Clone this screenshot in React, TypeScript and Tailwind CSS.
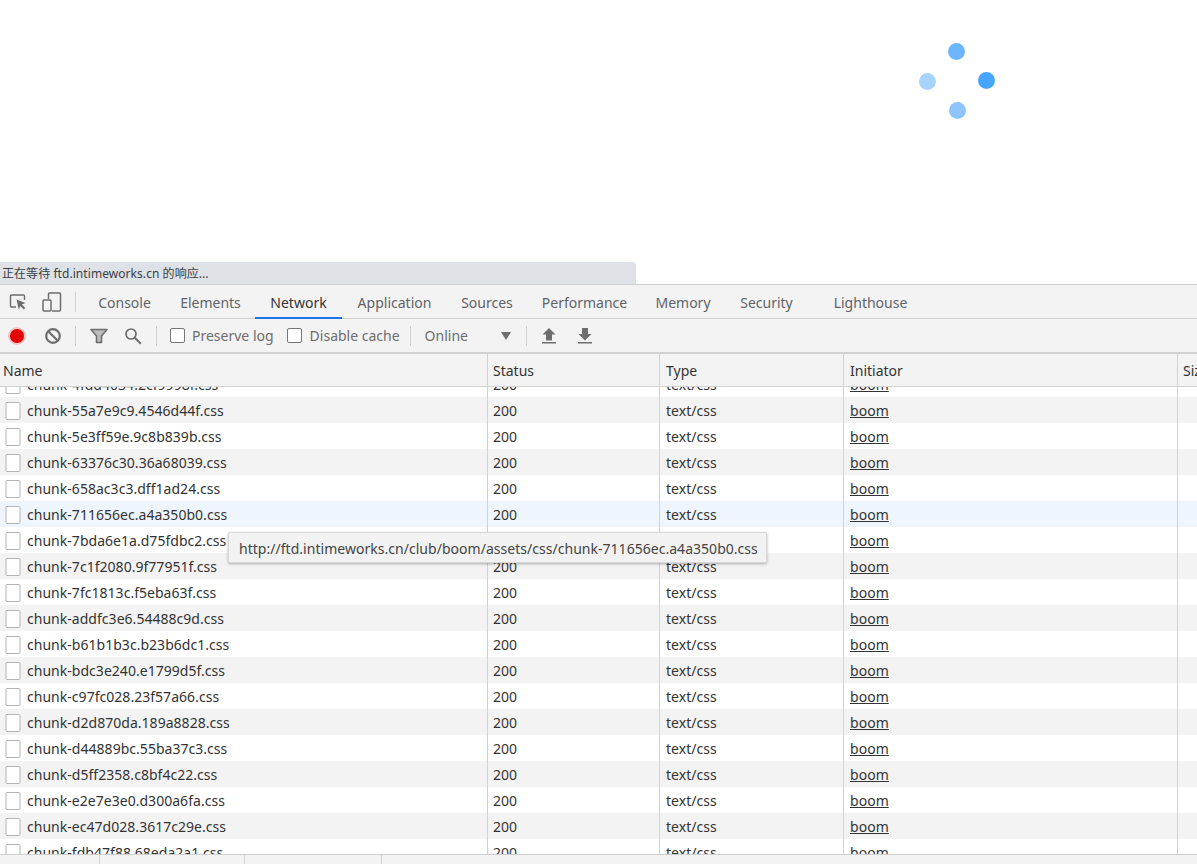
import React from "react";

const names = [
  "chunk-4fdd4034.2cf9998f.css",
  "chunk-55a7e9c9.4546d44f.css",
  "chunk-5e3ff59e.9c8b839b.css",
  "chunk-63376c30.36a68039.css",
  "chunk-658ac3c3.dff1ad24.css",
  "chunk-711656ec.a4a350b0.css",
  "chunk-7bda6e1a.d75fdbc2.css",
  "chunk-7c1f2080.9f77951f.css",
  "chunk-7fc1813c.f5eba63f.css",
  "chunk-addfc3e6.54488c9d.css",
  "chunk-b61b1b3c.b23b6dc1.css",
  "chunk-bdc3e240.e1799d5f.css",
  "chunk-c97fc028.23f57a66.css",
  "chunk-d2d870da.189a8828.css",
  "chunk-d44889bc.55ba37c3.css",
  "chunk-d5ff2358.c8bf4c22.css",
  "chunk-e2e7e3e0.d300a6fa.css",
  "chunk-ec47d028.3617c29e.css",
  "chunk-fdb47f88.68eda2a1.css",
];

const tabs = [
  { t: "Console", w: "w-[83px]" },
  { t: "Elements", w: "w-[89px]" },
  { t: "Network", w: "w-[87px]", active: true },
  { t: "Application", w: "w-[105px]" },
  { t: "Sources", w: "w-[80px]" },
  { t: "Performance", w: "w-[115px]" },
  { t: "Memory", w: "w-[82px]" },
  { t: "Security", w: "w-[85px]" },
  { t: "Lighthouse", w: "w-[123px]" },
];

const grid = "grid grid-cols-[488px_172px_184px_334px_1fr]";

function FileIcon() {
  return (
    <svg width="16" height="18" viewBox="0 0 16 18" className="shrink-0">
      <rect x="1" y="0.5" width="14" height="17" rx="1" fill="#fff" stroke="#b4b4b4" />
    </svg>
  );
}

function Divider() {
  return <div className="w-px h-5 bg-[#d0d0d0]" />;
}

function Check({ label, gap }: { label: string; gap: string }) {
  return (
    <div className={`flex items-center ${gap}`}>
      <div className="w-[15px] h-[15px] rounded-[2px] border border-[#767676] bg-white" />
      <span className="text-[#6e6e6e]">{label}</span>
    </div>
  );
}

export default function App() {
  return (
    <div
      className="relative w-[1197px] h-[864px] overflow-hidden bg-white text-[14px] text-[#333]"
      style={{ fontFamily: '"Noto Sans", "Noto Sans CJK SC", sans-serif' }}
    >
      <div className="relative h-[285px] bg-white border-b border-[#cfcfcf]">
        <div className="absolute left-[918px] top-[42px] w-[78px] h-[78px]">
          <div className="absolute left-[30px] top-[1px] w-[17px] h-[17px] rounded-full bg-[#6cb6ff]" />
          <div className="absolute left-[60px] top-[30px] w-[17px] h-[17px] rounded-full bg-[#46a6ff]" />
          <div className="absolute left-[31px] top-[60px] w-[17px] h-[17px] rounded-full bg-[#8cc5ff]" />
          <div className="absolute left-[1px] top-[31px] w-[17px] h-[17px] rounded-full bg-[#a9d3ff]" />
        </div>
        <div className="absolute left-0 top-[262px] w-[636px] h-[22px] pl-[2px] bg-[#dee1e6] rounded-tr-[4px] text-[12px] leading-[23px] tracking-[0.06px] text-[#3c4043] whitespace-nowrap">
          正在等待 ftd.intimeworks.cn 的响应...
        </div>
      </div>

      <div className="flex items-stretch h-[34px] bg-[#f3f3f3] border-b border-[#cfcfcf]">
        <div className="flex items-center w-[83px] shrink-0">
          <svg width="18" height="18" viewBox="0 0 18 18" className="ml-[9px]">
            <path d="M7 14H2.5a1 1 0 0 1-1-1V3a1 1 0 0 1 1-1h12a1 1 0 0 1 1 1v4" fill="none" stroke="#6e6e6e" strokeWidth="1.4" />
            <path d="M7.5 6.5l9 3.4-3.6 1.6 3.4 3.6-1.5 1.5-3.4-3.6-1.6 3.5z" fill="#6e6e6e" />
          </svg>
          <svg width="20" height="20" viewBox="0 0 20 20" className="ml-[15px]">
            <path d="M6.5 7V2a1 1 0 0 1 1-1h10a1 1 0 0 1 1 1v16a1 1 0 0 1-1 1H10" fill="none" stroke="#6e6e6e" strokeWidth="1.5" />
            <rect x="1" y="8" width="8" height="11" rx="1" fill="none" stroke="#6e6e6e" strokeWidth="1.5" />
          </svg>
          <div className="ml-[13px]"><Divider /></div>
        </div>
        {tabs.map((x) => (
          <div
            key={x.t}
            className={`flex items-center justify-center pt-[2px] border-b-2 -mb-px ${x.w} ${
              x.active ? "border-[#1a73e8] text-[#333]" : "border-transparent text-[#5f6368]"
            }`}
          >
            {x.t}
          </div>
        ))}
      </div>

      <div className="flex items-center h-[35px] bg-[#f3f3f3] border-b-2 border-[#d2d2d2] text-[14px]">
        <div className="ml-[8px] w-[18px] h-[18px] rounded-full bg-[#e60000] border-2 border-[#f3c4c4]" />
        <svg width="18" height="18" viewBox="0 0 18 18" className="ml-[18px]">
          <circle cx="9" cy="9" r="6.8" fill="none" stroke="#6e6e6e" strokeWidth="2.2" />
          <path d="M4.2 4.2l9.6 9.6" stroke="#6e6e6e" strokeWidth="2.2" />
        </svg>
        <div className="ml-[13px]"><Divider /></div>
        <svg width="18" height="16" viewBox="0 0 18 16" className="ml-[14px]">
          <path d="M1 1.5h16L11.5 8v6.5h-5V8z" fill="#bdbdbd" stroke="#6e6e6e" strokeWidth="1.6" strokeLinejoin="round" />
        </svg>
        <svg width="18" height="18" viewBox="0 0 18 18" className="ml-[16px]">
          <circle cx="7" cy="7" r="5" fill="none" stroke="#6e6e6e" strokeWidth="1.7" />
          <path d="M10.8 10.8l6 6" stroke="#6e6e6e" strokeWidth="2" />
        </svg>
        <div className="ml-[14px]"><Divider /></div>
        <div className="ml-[13px]"><Check label="Preserve log" gap="gap-[7px]" /></div>
        <div className="ml-[13px]"><Check label="Disable cache" gap="gap-[8px]" /></div>
        <div className="ml-[10px]"><Divider /></div>
        <span className="ml-[14px] text-[#6e6e6e] w-[76px]">Online</span>
        <svg width="10" height="8" viewBox="0 0 10 8"><path d="M0 0h10L5 8z" fill="#6e6e6e" /></svg>
        <div className="ml-[15px]"><Divider /></div>
        <svg width="14" height="16" viewBox="0 0 14 16" className="ml-[15px]">
          <path d="M7 0l6.5 6.5H10v6H4v-6H.5z M0 14h14v1.6H0z" fill="#6e6e6e" />
        </svg>
        <svg width="14" height="16" viewBox="0 0 14 16" className="ml-[22px]">
          <path d="M4 0h6v6h3.5L7 12.5.5 6H4z M0 14h14v1.6H0z" fill="#6e6e6e" />
        </svg>
      </div>

      <div className={`${grid} h-[33px] bg-[#f3f3f3] border-b border-[#d2d2d2] relative z-10 leading-[33px] text-[#333]`}>
        <div className="pl-[3px] border-r border-[#d2d2d2]">Name</div>
        <div className="pl-[5px] border-r border-[#d2d2d2]">Status</div>
        <div className="pl-[6px] border-r border-[#d2d2d2]">Type</div>
        <div className="pl-[6px] border-r border-[#d2d2d2]">Initiator</div>
        <div className="pl-[5px] whitespace-nowrap overflow-hidden">Size</div>
      </div>

      <div className="relative h-[467px] overflow-hidden bg-white tracking-[0.03px]">
        <div className="-mt-[16px]">
          {names.map((n, i) => (
            <div
              key={n}
              className={`${grid} h-[26px] leading-[28px] ${
                n.includes("711656ec") ? "bg-[#eff5fd]" : i % 2 === 1 ? "bg-[#f3f3f3]" : "bg-white"
              }`}
            >
              <div className="flex items-center pl-[5px] gap-[6px] border-r border-[#d2d2d2] whitespace-nowrap">
                <FileIcon />
                <span>{n}</span>
              </div>
              <div className="pl-[5px] border-r border-[#d2d2d2]">200</div>
              <div className="pl-[6px] border-r border-[#d2d2d2]">text/css</div>
              <div className="pl-[6px] border-r border-[#d2d2d2] underline">boom</div>
              <div />
            </div>
          ))}
        </div>
        <div className="absolute left-[228px] top-[145px] w-[539px] h-[31px] pl-[10px] leading-[32px] bg-[#f2f2f2] text-[#444] border border-[#d8d8d8] rounded-[2px] shadow-[0_1px_3px_rgba(0,0,0,0.3)] whitespace-nowrap">
          http://ftd.intimeworks.cn/club/boom/assets/css/chunk-711656ec.a4a350b0.css
        </div>
      </div>

      <div className="flex items-center h-[10px] bg-[#f3f3f3] border-t border-[#cfcfcf]">
        <div className="w-[100px] h-full border-r border-[#d2d2d2]" />
        <div className="w-[145px] h-full border-r border-[#d2d2d2]" />
        <div className="w-[137px] h-full border-r border-[#d2d2d2]" />
      </div>
    </div>
  );
}
